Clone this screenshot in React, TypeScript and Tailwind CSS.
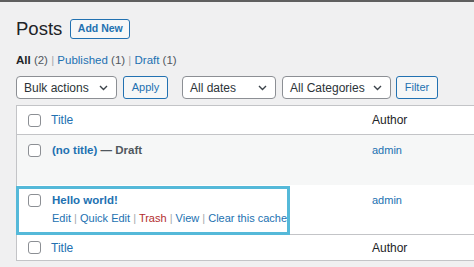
const linkStyle = 'text-[#2271b1]';
const selectStyle =
  'flex h-[23px] items-center justify-between rounded-[4px] border border-[#8c8f94] bg-white pl-[7px] pr-[8px] text-[12px] text-[#2c3338]';
const buttonStyle =
  'flex h-[23px] items-center justify-center rounded-[3px] border border-[#2271b1] bg-[#f6f7f7] text-[11px] text-[#2271b1]';

const Chevron = () => (
  <svg width="9" height="6" viewBox="0 0 9 6" fill="none">
    <path d="M1 1l3.5 3.5L8 1" stroke="#3c434a" strokeWidth="1.4" />
  </svg>
);

const Checkbox = () => (
  <div className="h-[13px] w-[13px] shrink-0 rounded-[3px] border border-[#8c8f94] bg-white" />
);

const Sep = () => <span className="text-[#a7aaad]"> | </span>;

const App = () => {
  return (
    <div
      className="h-[267px] w-[474px] overflow-hidden bg-[#f0f0f1] text-[#1d2327]"
      style={{ fontFamily: '"Liberation Sans", Arial, sans-serif' }}
    >
      <div className="h-[2px] bg-[#5f5f5f]" />

      <div className="pl-[16px]">
        <div className="mt-[17px] flex h-[20px] items-center">
          <h1 className="text-[18.5px] leading-none font-normal">Posts</h1>
          <button className="ml-[8px] flex h-[20px] w-[60px] items-center justify-center rounded-[3px] border border-[#2271b1] bg-[#f6f7f7] text-[10.5px] font-bold text-[#2271b1]">
            Add New
          </button>
        </div>

        <div className="mt-[15px] flex h-[14px] items-center text-[11.5px] whitespace-pre">
          <span className="font-bold">All</span>
          <span className="text-[#50575e]"> (2)</span>
          <Sep />
          <span className={linkStyle}>Published</span>
          <span className="text-[#50575e]"> (1)</span>
          <Sep />
          <span className={linkStyle}>Draft</span>
          <span className="text-[#50575e]"> (1)</span>
        </div>

        <div className="mt-[8px] flex items-center">
          <div className={selectStyle + ' w-[101px]'}>
            <span>Bulk actions</span>
            <Chevron />
          </div>
          <button className={buttonStyle + ' ml-[6px] w-[45px]'}>Apply</button>
          <div className={selectStyle + ' ml-[14px] w-[94px]'}>
            <span>All dates</span>
            <Chevron />
          </div>
          <div className={selectStyle + ' ml-[6px] w-[109px]'}>
            <span>All Categories</span>
            <Chevron />
          </div>
          <button className={buttonStyle + ' ml-[5px] w-[42px]'}>Filter</button>
        </div>

        <div className="mt-[6px] w-[480px] border border-[#c3c4c7] bg-white text-[12px]">
          <div className="flex h-[29px] items-center border-b border-[#c3c4c7]">
            <div className="flex w-[34px] justify-center pl-[1px]">
              <Checkbox />
            </div>
            <span className={linkStyle + ' w-[321px]'}>Title</span>
            <span className="text-[#1d2327]">Author</span>
          </div>

          <div className="flex h-[50px] items-start bg-[#f6f7f7] pt-[9px]">
            <div className="flex w-[34px] justify-center pl-[1px]">
              <Checkbox />
            </div>
            <div className="w-[321px] pl-[1px] text-[11.5px] leading-[13px] font-bold">
              <span className={linkStyle}>(no title)</span>
              <span className="text-[#50575e]"> — Draft</span>
            </div>
            <span className={linkStyle + ' text-[11px] leading-[13px]'}>admin</span>
          </div>

          <div className="relative flex h-[49px] items-start pt-[8px]">
            <div className="flex w-[34px] justify-center pt-[1px] pl-[1px]">
              <Checkbox />
            </div>
            <div className="w-[321px] pl-[1px]">
              <div className={linkStyle + ' text-[11.5px] leading-[14px] font-bold'}>
                Hello world!
              </div>
              <div className="mt-[5px] text-[11px] leading-[13px] whitespace-pre">
                <span className={linkStyle}>Edit</span>
                <Sep />
                <span className={linkStyle}>Quick Edit</span>
                <Sep />
                <span className="text-[#b32d2e]">Trash</span>
                <Sep />
                <span className={linkStyle}>View</span>
                <Sep />
                <span className={linkStyle}>Clear this cache</span>
              </div>
            </div>
            <span className={linkStyle + ' text-[11px] leading-[14px]'}>admin</span>
            <div className="absolute top-[1px] left-[-1px] h-[49px] w-[274px] border-[3px] border-[#55b9d9]" />
          </div>

          <div className="flex h-[26px] items-center border-t border-[#c3c4c7]">
            <div className="flex w-[34px] justify-center pl-[1px]">
              <Checkbox />
            </div>
            <span className={linkStyle + ' w-[321px]'}>Title</span>
            <span className="text-[#1d2327]">Author</span>
          </div>
        </div>
      </div>
    </div>
  );
};

export default App;
